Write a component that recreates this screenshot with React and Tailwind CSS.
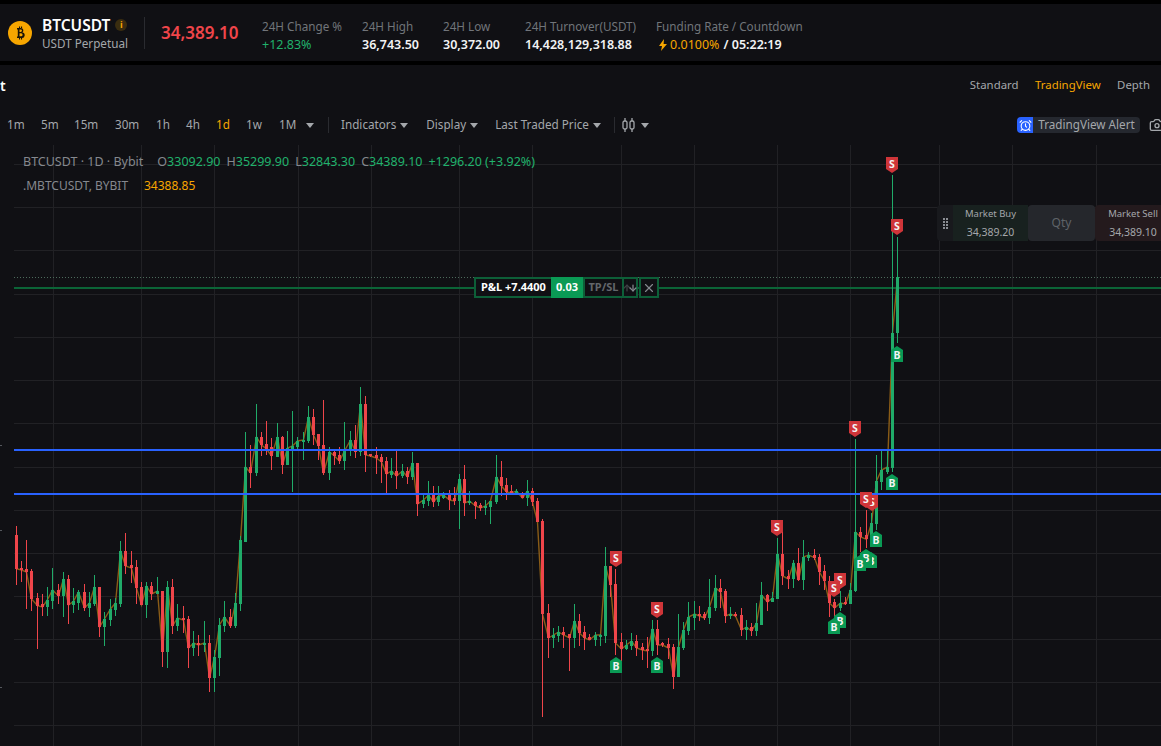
import { AlarmClock, ArrowDown, ArrowUp, Camera, X } from "lucide-react";

// candles: [colour, wickTop, bodyTop, bodyBottom, wickBottom], read off in 3x crop units
const partA = [
  ["r",438,465,566,614],["r",543,563,570,605],["r",480,568,576,686],["r",568,573,657,692],["r",640,654,677,806],
  ["r",642,673,681,708],["g",621,659,681,708],["g",564,630,662,687],["r",612,630,648,671],["g",576,597,648,711],
  ["r",586,597,675,731],["g",624,664,675,699],["g",631,636,669,690],["r",612,636,684,693],["g",636,669,684,711],
  ["g",585,621,672,678],["r",621,621,741,771],["g",696,717,741,798],["g",657,687,720,738],["g",654,669,690,708],
  ["g",483,513,672,681],["r",460,513,558,582],["r",513,555,564,610],["r",540,561,624,672],["r",606,621,675,675],
  ["g",606,618,675,714],["r",606,618,642,660],["g",591,633,642,642],["r",633,633,816,861],["g",603,621,816,864],
  ["r",597,621,738,762],["g",672,714,738,753],["r",678,714,720,760],["r",708,717,804,864],["g",753,789,804,828],
  ["r",765,789,795,828],["g",723,789,795,816],["r",765,789,894,936],["g",810,831,894,936],["g",714,735,834,888],
  ["g",663,711,738,756],["r",687,711,738,744],["g",640,669,738,744],["g",468,480,672,693],["g",156,261,486,486],
  ["r",195,261,279,324],["g",72,171,279,288],["r",156,171,195,228],["r",123,192,207,225],["r",174,201,228,270],
  ["g",129,171,231,231],["r",168,171,255,282],["g",153,204,255,255],["g",93,198,207,336],["g",171,183,201,210],
];
const partB = [
  ["g",156,180,186,240],["g",78,111,183,189],["r",87,111,165,195],["r",162,162,198,240],["r",60,195,279,285],
  ["g",201,216,279,300],["r",207,216,228,255],["r",201,225,243,252],["g",126,213,243,270],["g",153,180,213,228],
  ["r",135,180,216,234],["g",21,72,216,228],["r",48,72,225,276],["r",222,222,228,231],["r",201,225,234,282],
  ["r",222,231,246,309],["r",232,243,282,340],["g",234,273,285,294],["r",213,273,288,327],["g",252,273,288,294],
  ["r",260,273,291,312],["g",216,249,291,300],["r",249,249,372,408],["g",345,360,372,384],["g",303,345,363,378],
  ["r",318,345,366,381],["g",318,348,366,378],["g",336,345,354,357],["r",330,345,360,390],["r",320,354,363,375],
  ["g",282,297,363,447],["r",255,297,369,408],["g",333,363,369,375],["r",363,366,378,417],["r",370,375,384,393],
  ["g",360,378,384,405],["g",363,363,381,432],["g",225,291,366,372],["r",243,291,318,348],["r",294,315,336,360],
  ["r",315,333,339,345],["g",327,333,340,342],["r",336,339,354,354],["g",300,333,354,378],["r",324,333,366,378],
];
const partC = [
  ["r",55,64,126,126],["r",118,124,402,711],["r",372,399,474,534],["g",444,465,474,504],["g",438,456,468,486],
  ["r",441,456,465,504],["r",462,462,474,573],["g",372,423,474,504],["r",402,423,459,498],["r",438,456,474,510],
  ["r",462,471,480,480],["g",456,465,480,498],["g",462,465,468,498],["g",201,258,468,489],["r",258,258,315,351],
  ["r",267,312,489,525],["r",459,486,507,543],["g",480,495,507,510],["g",459,483,498,510],["r",465,483,504,528],
  ["r",489,501,510,540],["r",471,507,513,564],["g",420,447,513,528],["r",420,447,495,525],["r",486,489,495,501],
  ["r",474,492,504,537],["r",492,501,591,627],["g",402,501,591,591],["g",426,450,504,510],["g",366,411,453,465],
  ["g",363,402,414,450],["r",378,402,408,423],["r",396,402,414,420],["g",297,381,414,432],["g",285,324,384,393],
  ["r",297,324,336,384],["r",327,333,408,429],["g",381,402,408,417],["r",396,402,408,411],["r",384,405,450,468],
  ["g",420,441,450,480],["r",429,441,453,468],["g",369,429,453,468],
];
const partD = [
  ["g",546,585,675,675],["r",582,585,606,633],["g",576,594,606,606],["g",414,462,597,597],["r",390,462,528,555],
  ["r",510,528,537,567],["g",480,489,537,564],["r",444,489,540,543],["g",420,471,540,570],["g",456,465,474,483],
  ["r",447,465,473,480],["r",462,471,516,555],["r",495,513,543,570],["r",528,552,609,651],["r",597,606,624,654],
  ["g",573,609,625,633],["r",590,606,612,615],["g",549,570,612,612],["g",117,396,573,576],["r",381,396,411,456],
  ["r",330,405,418,445],["g",340,370,440,440],["g",165,243,372,390],["g",153,210,246,270],["g",153,201,216,222],
  ["g",-675,-201,205,216],["g",-489,-369,-201,-171],
];

const toCandles = (part, originY) =>
  part.map(([c, a, b, d, e]) => ({
    up: c === "g",
    wickTop: originY + a / 3,
    top: originY + b / 3,
    bottom: originY + d / 3,
    wickBottom: originY + e / 3,
  }));

const candles = [
  ...toCandles(partA, 380),
  ...toCandles(partB, 380),
  ...toCandles(partC, 480),
  ...toCandles(partD, 400),
].map((k, i) => ({ ...k, x: Math.round(16.33 + i * 5.214 - 1.5) }));

const closes = candles.map((k) => `${k.x + 1.5},${(k.up ? k.top : k.bottom).toFixed(1)}`).join(" ");

const hLines = [164, 207, 250, 294, 337, 380, 423, 467, 510, 553, 596, 639, 682, 725];
const vLines = [53, 141, 214, 298, 371, 459, 532, 621, 694, 777, 850, 939, 1012, 1096];

// painted in this order, later ones cover earlier ones
const markers = [
  ["S", 892, 157], ["S", 897, 219], ["S", 855, 421], ["S", 777, 520], ["S", 616, 551], ["S", 657, 602],
  ["S", 840, 573], ["S", 834, 581], ["S", 872, 495], ["S", 866, 492],
  ["B", 616, 657], ["B", 657, 657], ["B", 892, 474], ["B", 897, 346], ["B", 876, 531],
  ["B", 871, 552], ["B", 866, 549], ["B", 860, 555], ["B", 840, 612], ["B", 834, 618],
];

function Marker({ kind, cx, y }) {
  const sell = kind === "S";
  const l = cx - 6;
  const r = cx + 6;
  const points = sell
    ? `${l},${y} ${r},${y} ${r},${y + 12} ${cx},${y + 16} ${l},${y + 12}`
    : `${cx},${y} ${r},${y + 4} ${r},${y + 16} ${l},${y + 16} ${l},${y + 4}`;
  return (
    <g>
      <polygon points={points} fill={sell ? "#cf3539" : "#0a9a55"} />
      <text x={cx} y={sell ? y + 10.5 : y + 13} textAnchor="middle" fontSize="10.5" fontWeight="700" fill="#f3f4f5">
        {kind}
      </text>
    </g>
  );
}

function Chart() {
  return (
    <svg className="absolute inset-0 h-full w-full" viewBox="0 145 1161 601" fontFamily="'Noto Sans', sans-serif">
      <g shapeRendering="crispEdges">
        {hLines.map((y) => (
          <rect key={y} x="14" y={y} width="1147" height="1" fill="#212125" />
        ))}
        {vLines.map((x) => (
          <rect key={x} x={x} y="145" width="1" height="601" fill="#212125" />
        ))}
        <rect x="0" y="445" width="2" height="1" fill="#55585e" />
        <rect x="0" y="530" width="2" height="1" fill="#55585e" />
        <rect x="0" y="687" width="2" height="1" fill="#55585e" />
        <line x1="14" y1="277.5" x2="1161" y2="277.5" stroke="#4d6b5c" strokeDasharray="1 2" />
        <rect x="14" y="287" width="1147" height="2" fill="#0b6437" />
      </g>
      <polyline points={closes} fill="none" stroke="#8a5c17" strokeWidth="1.4" />
      <g shapeRendering="crispEdges">
        {candles.map((k, i) => (
          <g key={i} fill={k.up ? "#20ab69" : "#ef454a"}>
            <rect x={k.x + 1} y={k.wickTop} width="1" height={k.wickBottom - k.wickTop} />
            <rect x={k.x} y={k.top} width="3" height={Math.max(k.bottom - k.top, 2)} />
          </g>
        ))}
        <rect x="14" y="449" width="1147" height="2" fill="#2962ff" />
        <rect x="14" y="493" width="1147" height="2" fill="#2962ff" />
      </g>
      {markers.map(([kind, cx, y], i) => (
        <Marker key={i} kind={kind} cx={cx} y={y} />
      ))}
    </svg>
  );
}

function Stat({ label, className, children }) {
  return (
    <div className={className}>
      <div className="text-[11.7px] leading-4 text-[#71757a]">{label}</div>
      <div className="mt-[3px] text-[12.5px] leading-4 font-semibold text-[#f2f3f4]">{children}</div>
    </div>
  );
}

function Caret() {
  return <span className="ml-1 h-0 w-0 border-x-[4px] border-t-[5px] border-x-transparent border-t-[#a4a7ab]" />;
}

const intervals = [
  ["1m", "w-[34px]"],
  ["5m", "w-[33px]"],
  ["15m", "w-[41px]"],
  ["30m", "w-[41px]"],
  ["1h", "w-[30px]"],
  ["4h", "w-[30px]"],
  ["1d", "w-[30px]"],
  ["1w", "w-[33px]"],
  ["1M", "w-[23px]"],
];

export default function App() {
  return (
    <div className="h-[746px] w-[1161px] overflow-hidden bg-black pt-[4px] font-['Noto_Sans',sans-serif]">
      <header className="flex h-[57px] items-center bg-[#101014] pl-[8px]">
        <svg width="24" height="24" viewBox="0 0 24 24" className="shrink-0">
          <circle cx="12" cy="12" r="12" fill="#f7a600" />
          <path
            d="M9 7h4a2.4 2.4 0 0 1 1.3 4.4A2.6 2.6 0 0 1 13.4 17H9v-1.4h.8V8.4H9zM11.5 8.6v2.3h1.3a1.15 1.15 0 0 0 0-2.3zM11.5 12.2v3h1.6a1.5 1.5 0 0 0 0-3zM11 5.5h1.1V7H11zM13 5.5h1.1V7H13zM11 17h1.1v1.5H11zM13 17h1.1v1.5H13z"
            fill="#1b1407"
            fillRule="evenodd"
          />
        </svg>
        <div className="ml-[10px] w-[102px] shrink-0">
          <div className="flex items-center">
            <span className="text-[15.5px] leading-5 font-semibold text-white">BTCUSDT</span>
            <span className="ml-[5px] flex h-[12px] w-[12px] items-center justify-center rounded-full bg-[#3a2d10] text-[9px] leading-none font-bold text-[#f7a600]">
              i
            </span>
          </div>
          <div className="text-[11.7px] leading-4 text-[#a4a7ab]">USDT Perpetual</div>
        </div>
        <div className="h-[32px] w-px shrink-0 bg-[#2a2b30]" />
        <div className="ml-[16px] w-[101px] shrink-0 text-[17px] font-semibold text-[#ef454a]">34,389.10</div>
        <div className="flex pt-[6px]">
          <Stat label="24H Change %" className="w-[100px] shrink-0">
            <span className="font-normal text-[#20b26c]">+12.83%</span>
          </Stat>
          <Stat label="24H High" className="w-[81px] shrink-0">36,743.50</Stat>
          <Stat label="24H Low" className="w-[82px] shrink-0">30,372.00</Stat>
          <Stat label="24H Turnover(USDT)" className="w-[131px] shrink-0">14,428,129,318.88</Stat>
          <Stat label="Funding Rate / Countdown" className="shrink-0">
            <span className="flex items-center">
              <svg width="8" height="12" viewBox="0 0 8 12" className="ml-[3px] mr-[3px]">
                <path d="M5 0 0 7h3L2 12l6-7H4.6z" fill="#f7a600" />
              </svg>
              <span className="font-normal text-[#f7a600]">0.0100%</span>
              <span className="ml-1">/ 05:22:19</span>
            </span>
          </Stat>
        </div>
      </header>

      <main className="mt-[4px] flex h-[681px] flex-col bg-[#101014]">
        <div className="flex h-[40px] items-center justify-between">
          <span className="text-[14px] font-semibold text-white">t</span>
          <div className="mr-[11px] flex gap-[16.5px] text-[11.4px] text-[#a4a7ab]">
            <span>Standard</span>
            <span className="text-[#f7a600]">TradingView</span>
            <span>Depth</span>
          </div>
        </div>

        <div className="flex h-[40px] items-center pl-[7px] text-[11.7px] text-[#a4a7ab]">
          {intervals.map(([t, w]) => (
            <span key={t} className={t === "1d" ? `${w} text-[#f7a600]` : w}>
              {t}
            </span>
          ))}
          <Caret />
          <div className="mr-[12px] ml-[14px] h-[16px] w-px bg-[#2a2b30]" />
          <span>Indicators</span>
          <Caret />
          <span className="ml-[18px]">Display</span>
          <Caret />
          <span className="ml-[17px]">Last Traded Price</span>
          <Caret />
          <div className="mr-[6px] ml-[13px] h-[16px] w-px bg-[#2a2b30]" />
          <svg width="16" height="16" viewBox="0 0 16 16" fill="none" stroke="#a4a7ab" strokeWidth="1.3">
            <path d="M4 1v14M11 1v14" />
            <rect x="2" y="4" width="4" height="8" rx="1.5" fill="#101014" />
            <rect x="9" y="4" width="4" height="8" rx="1.5" fill="#101014" />
          </svg>
          <Caret />
          <div className="ml-auto flex h-[16px] items-center">
            <span className="flex h-[16px] w-[16px] items-center justify-center rounded-l-sm bg-[#2962ff]">
              <AlarmClock size={13} color="#fff" />
            </span>
            <span className="flex h-[16px] w-[107px] items-center justify-center rounded-r-sm bg-[#25282f] text-[#a4a7ab]">
              TradingView Alert
            </span>
            <Camera size={16} className="mr-[-4px] ml-[9px] shrink-0 text-[#a4a7ab]" />
          </div>
        </div>

        <div className="relative flex-1">
          <Chart />

          <div className="absolute top-[9px] left-[23px] leading-4 text-[#85888e]">
            <div className="flex text-[12.5px]">
              <span>BTCUSDT · 1D · Bybit</span>
              <span className="ml-[14px]">
                O<span className="text-[#20b26c]">33092.90</span>
              </span>
              <span className="ml-[6px]">
                H<span className="text-[#20b26c]">35299.90</span>
              </span>
              <span className="ml-[6px]">
                L<span className="text-[#20b26c]">32843.30</span>
              </span>
              <span className="ml-[6px]">
                C<span className="text-[#20b26c]">34389.10</span>
              </span>
              <span className="ml-[6px] text-[#20b26c]">+1296.20 (+3.92%)</span>
            </div>
            <div className="mt-[8px] flex text-[12px]">
              <span className="w-[121px]">.MBTCUSDT, BYBIT</span>
              <span className="text-[#f7a600]">34388.85</span>
            </div>
          </div>

          <div className="absolute top-[60px] left-[937px] flex h-[36px] w-[224px] text-[#a4a7ab]">
            <div className="flex w-[16px] items-center justify-center rounded-l bg-[#18191d]">
              <div className="grid grid-cols-2 gap-[1px]">
                {[0, 1, 2, 3, 4, 5, 6, 7].map((i) => (
                  <span key={i} className="h-[2px] w-[2px] bg-[#8a8d93]" />
                ))}
              </div>
            </div>
            <div className="flex w-[75px] flex-col items-center justify-center gap-[6px] bg-[#18211f]">
              <span className="text-[9.5px] leading-3">Market Buy</span>
              <span className="text-[10.5px] leading-3">34,389.20</span>
            </div>
            <div className="flex w-[67px] items-center justify-center rounded bg-[#25272c] text-[12px] text-[#5f6368]">
              Qty
            </div>
            <div className="flex w-[66px] flex-col items-center justify-center gap-[6px] rounded-l bg-[#241a1d] pl-[10px]">
              <span className="text-[9.5px] leading-3">Market Sell</span>
              <span className="text-[10.5px] leading-3">34,389.10</span>
            </div>
          </div>

          <div className="absolute top-[132px] left-[474px] flex h-[21px] items-stretch text-[11px] font-bold">
            <div className="flex w-[77px] items-center justify-center border-2 border-r-0 border-[#0d5f38] bg-[#101014] text-white">
              P&amp;L +7.4400
            </div>
            <div className="flex w-[32px] items-center justify-center bg-[#0a9a55] text-white">0.03</div>
            <div className="flex w-[41px] items-center justify-center border-2 border-[#0d5f38] bg-[#101014] text-[#63666b]">
              TP/SL
            </div>
            <div className="flex w-[14px] items-center justify-center border-2 border-l-0 border-[#0d5f38] bg-[#101014]">
              <ArrowUp size={10} strokeWidth={3} className="mr-[-2px] shrink-0 text-[#3f4246]" />
              <ArrowDown size={10} strokeWidth={3} className="ml-[-2px] shrink-0 text-[#85888e]" />
            </div>
            <div className="ml-px flex w-[20px] items-center justify-center border-2 border-[#0d5f38] bg-[#101014]">
              <X size={14} className="text-[#85888e]" />
            </div>
          </div>
        </div>
      </main>
    </div>
  );
}
